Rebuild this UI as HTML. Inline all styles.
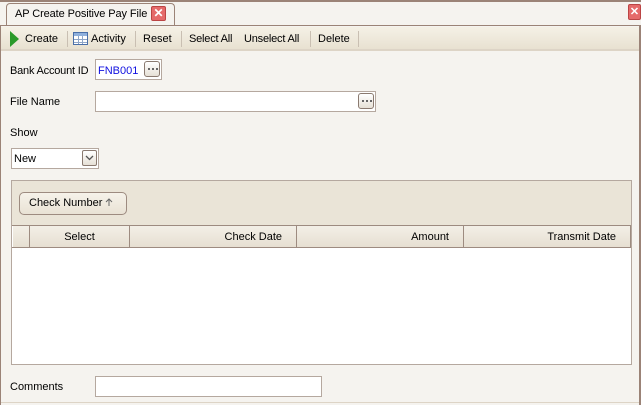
<!DOCTYPE html><html><head><style>
*{box-sizing:border-box}
body{margin:0;width:641px;height:405px;background:#f5f3ef;font-family:"Liberation Sans",sans-serif;font-size:11px;color:#000;position:relative;overflow:hidden}
.a{position:absolute}
.inp{position:absolute;background:#fff;border:1px solid #b5a89f}
.dots{position:absolute;width:16px;height:16px;border:1px solid #8a7a70;border-radius:3px;background:linear-gradient(#fff,#e6e0d6)}
.dots:after{content:"";position:absolute;left:3px;top:6px;width:2px;height:2px;background:#666;box-shadow:4px 0 #666,8px 0 #666}
.sep{position:absolute;top:31px;width:1px;height:16px;background:#c9bfb2}
.tb{position:absolute;top:33px;font-size:11px}
.hd{position:absolute;top:226px;height:21px;border-right:1px solid #9d8b80;background:linear-gradient(#f3efe7,#e6dfd2);font-size:11px;line-height:22px;text-align:right;padding-right:14px}
</style></head><body>
<div class="a" style="left:0;top:0;width:641px;height:2px;background:#9b8377"></div>
<div class="a" style="left:6px;top:3px;width:169px;height:23px;border:1px solid #9b8377;border-bottom:none;border-radius:4px 4px 0 0;background:#f5f3ef"></div>
<div class="a" style="left:15px;top:8px;font-size:11px;letter-spacing:-0.1px">AP Create Positive Pay File</div>
<div class="a" style="left:151px;top:6px;width:15px;height:15px;background:#e56a6a;border:1px solid #b44;border-radius:2px;color:#fff;font-weight:bold;font-size:12px;line-height:13px;text-align:center">✕</div>
<div class="a" style="left:628px;top:4px;width:13px;height:16px;background:#e56a6a;border:1px solid #b44;border-radius:2px;color:#fff;font-weight:bold;font-size:11px;line-height:14px;text-align:center">✕</div>
<div class="a" style="left:0;top:25px;width:641px;height:1px;background:#9b8377"></div>
<div class="a" style="left:0;top:26px;width:1px;height:379px;background:#9b8377"></div>
<div class="a" style="left:639px;top:26px;width:2px;height:379px;background:#9b8377"></div>
<div class="a" style="left:1px;top:27px;width:638px;height:24px;background:linear-gradient(#f5f1e6,#e8e1d1);border-bottom:2px solid #ddd4c6"></div>
<svg class="a" style="left:10px;top:31px" width="9" height="16"><path d="M0 0L9 8L0 16Z" fill="#2a9a2a"/></svg>
<div class="tb" style="left:25px">Create</div>
<div class="sep" style="left:67px"></div>
<svg class="a" style="left:73px;top:32px" width="15" height="13"><rect x=".5" y=".5" width="14" height="12" fill="#fff" stroke="#4a6fa8"/><rect x="1" y="1" width="13" height="3" fill="#8fb0dc"/><path d="M1 7.5H14M1 10.5H14M5.5 4V12M9.5 4V12" stroke="#8fa6c8"/></svg>
<div class="tb" style="left:91px">Activity</div>
<div class="sep" style="left:135px"></div>
<div class="tb" style="left:143px">Reset</div>
<div class="sep" style="left:181px"></div>
<div class="tb" style="left:189px;letter-spacing:-0.2px">Select All</div>
<div class="tb" style="left:244px;letter-spacing:-0.2px">Unselect All</div>
<div class="sep" style="left:310px"></div>
<div class="tb" style="left:318px">Delete</div>
<div class="sep" style="left:358px"></div>
<div class="a" style="left:10px;top:65px;letter-spacing:-0.2px">Bank Account ID</div>
<div class="inp" style="left:95px;top:59px;width:67px;height:21px"></div>
<div class="a" style="left:98px;top:65px;color:#1010e0">FNB001</div>
<div class="dots" style="left:144px;top:61px"></div>
<div class="a" style="left:10px;top:96px">File Name</div>
<div class="inp" style="left:95px;top:91px;width:281px;height:21px"></div>
<div class="dots" style="left:358px;top:93px"></div>
<div class="a" style="left:10px;top:127px">Show</div>
<div class="inp" style="left:11px;top:148px;width:88px;height:21px"></div>
<div class="a" style="left:14px;top:153px">New</div>
<div class="a" style="left:82px;top:150px;width:15px;height:16px;border:1px solid #8a7a70;border-radius:2px;background:linear-gradient(#fff,#e6e0d6)"><svg width="13" height="14"><path d="M3 5L6.5 8.5L10 5" stroke="#555" fill="none" stroke-width="1.3"/></svg></div>
<div class="a" style="left:11px;top:180px;width:621px;height:185px;border:1px solid #b5a89f;background:#fff"></div>
<div class="a" style="left:12px;top:181px;width:619px;height:44px;background:#eae4d7"></div>
<div class="a" style="left:19px;top:192px;width:108px;height:23px;border:1px solid #9d8b80;border-radius:5px;background:linear-gradient(#f6f2ea,#e9e2d5);font-size:11px;line-height:21px;padding-left:9px">Check Number <svg width="8" height="9" style="vertical-align:-1px"><path d="M4 8V1M1 4L4 1L7 4" stroke="#666" fill="none"/></svg></div>
<div class="a" style="left:12px;top:225px;width:619px;height:23px;border-top:1px solid #9d8b80;border-bottom:1px solid #9d8b80"></div>
<div class="hd" style="left:13px;width:17px;padding:0"></div>
<div class="hd" style="left:30px;width:100px;text-align:center;padding:0">Select</div>
<div class="hd" style="left:130px;width:167px">Check Date</div>
<div class="hd" style="left:297px;width:167px">Amount</div>
<div class="hd" style="left:464px;width:167px">Transmit Date</div>
<div class="a" style="left:10px;top:381px">Comments</div>
<div class="inp" style="left:95px;top:376px;width:227px;height:21px"></div>
<div class="a" style="left:1px;top:402px;width:638px;height:1px;background:#ddd4c6"></div>
</body></html>
